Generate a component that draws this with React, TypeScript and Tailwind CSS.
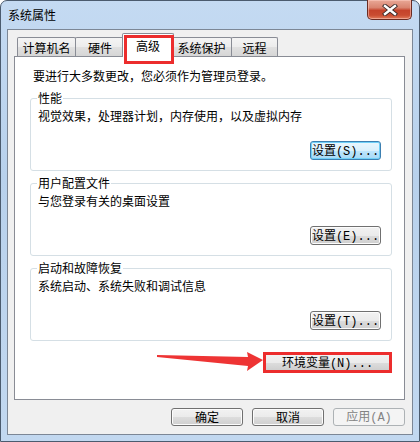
const btnGray =
  "flex items-center justify-center rounded-[3px] border border-[#707070] bg-[linear-gradient(to_bottom,#f2f2f2_0%,#ebebeb_50%,#dddddd_51%,#cfcfcf_100%)] shadow-[inset_0_0_0_1px_#fcfcfc] text-black";
const btnDefault =
  "flex items-center justify-center rounded-[3px] border border-[#3c7fb1] bg-[linear-gradient(to_bottom,#eaf6fd_0%,#d9f0fc_50%,#bee6fd_51%,#a7d9f5_100%)] shadow-[inset_0_0_0_1px_#6fd0f8] text-black";
const btnDisabled =
  "flex items-center justify-center rounded-[3px] border border-[#adb2b5] bg-[#f4f4f4] text-[#838383]";

const tabOff =
  "h-[19px] flex justify-center pt-[2px] border-t border-l border-r border-[#898c95] rounded-t-[2px] bg-[linear-gradient(to_bottom,#f4f4f4_0%,#ececec_50%,#e0e0e0_51%,#d6d6d6_100%)]";

// the ascii part of the button labels is set monospaced, like the old bitmap font
function Label({ cn, key_ }: { cn: string; key_: string }) {
  return (
    <span className="whitespace-nowrap">
      {cn}
      <span className="font-['Liberation_Mono',monospace] text-[12px]">{key_}</span>
    </span>
  );
}

function CloseButton() {
  return (
    <div className="-mt-px mr-[7px] w-[45px] h-[20px] flex items-center justify-center rounded-b-[5px] border border-t-0 border-[#6a2b22] bg-[linear-gradient(to_bottom,#e9a897_0%,#d98470_40%,#c5432b_55%,#c94c31_80%,#e17c5c_100%)] shadow-[inset_0_0_0_1px_rgba(255,210,200,0.5)]">
      <svg width="16" height="12" viewBox="0 0 16 12">
        <path d="M3 2 L13 10 M13 2 L3 10" stroke="#3b2a28" strokeWidth="4.2" strokeLinecap="square" />
        <path d="M3 2 L13 10 M13 2 L3 10" stroke="#ffffff" strokeWidth="2.4" strokeLinecap="square" />
      </svg>
    </div>
  );
}

function Group({ title, desc, hotkey, primary }: { title: string; desc: string; hotkey: string; primary?: boolean }) {
  return (
    <fieldset className="ml-[15px] mr-[12px] h-[81px] border border-[#d5dfe5] rounded-[3px] flex flex-col">
      <legend className="ml-[6px] px-[1px] leading-[16px]">{title}</legend>
      <div className="pl-[7px] mt-[2px]">{desc}</div>
      <div className="mt-[17px] pr-[10px] flex justify-end">
        <div className={`${primary ? btnDefault : btnGray} w-[71px] h-[19px]`}>
          <Label cn="设置" key_={hotkey} />
        </div>
      </div>
    </fieldset>
  );
}

export default function App() {
  return (
    <div className="relative w-[420px] h-[442px] flex flex-col rounded-t-[7px] border border-[#4b5b6e] bg-[linear-gradient(to_bottom,#c4daf2_0%,#b8d1ec_40%,#c2d8f0_100%)] font-['Noto_Sans_CJK_SC',sans-serif] text-[12px] leading-[16px] text-black">
      <div className="h-[28px] flex items-start justify-between">
        <span className="ml-[7px] mt-[6px]">系统属性</span>
        <CloseButton />
      </div>

      <div className="flex-1 mx-[6px] mb-[6px] flex flex-col border border-[#7c8796] bg-[#f0f0f0]">
        <div className="h-[26px] flex items-end pl-[9px]">
          <div className={`${tabOff} w-[59px]`}>计算机名</div>
          <div className={`${tabOff} -ml-px w-[50px]`}>硬件</div>
          <div className="relative z-10 -ml-[3px] -mb-px w-[52px] h-[24px] flex justify-center pt-[4px] border-t border-l border-r border-[#898c95] rounded-t-[2px] bg-white">
            高级
            <div className="absolute left-[1px] top-[1px] w-[50px] h-[29px] border-[3px] border-[#ec2d2d]" />
          </div>
          <div className={`${tabOff} -ml-[3px] w-[61px]`}>系统保护</div>
          <div className={`${tabOff} -ml-px w-[47px]`}>远程</div>
        </div>

        <div className="ml-[6px] mr-[7px] h-[344px] border border-[#898c95] bg-white flex flex-col">
          <div className="pl-[18px] pt-[11px]">要进行大多数更改，您必须作为管理员登录。</div>
          <div className="mt-[6px]">
            <Group title="性能" desc="视觉效果，处理器计划，内存使用，以及虚拟内存" hotkey="(S)..." primary />
          </div>
          <div className="mt-[4px]">
            <Group title="用户配置文件" desc="与您登录有关的桌面设置" hotkey="(E)..." />
          </div>
          <div className="mt-[4px]">
            <Group title="启动和故障恢复" desc="系统启动、系统失败和调试信息" hotkey="(T)..." />
          </div>
          <div className="mt-[11px] pr-[12px] flex justify-end">
            <div className="w-[129px] h-[21px] border-[3px] border-[#ec2d2d] flex">
              <div className="flex-1 flex items-center justify-center leading-[15px] bg-[linear-gradient(to_bottom,#f2f2f2_0%,#ebebeb_50%,#dddddd_51%,#cfcfcf_100%)]">
                <Label cn="环境变量" key_="(N)..." />
              </div>
            </div>
          </div>
        </div>

        <div className="mt-[8px] pr-[7px] flex justify-end gap-[9px]">
          <div className={`${btnGray} w-[72px] h-[18px]`}>确定</div>
          <div className={`${btnGray} w-[72px] h-[18px]`}>取消</div>
          <div className={`${btnDisabled} w-[72px] h-[18px]`}>
            <Label cn="应用" key_="(A)" />
          </div>
        </div>
      </div>

      <svg className="absolute left-[149px] top-[344px]" width="120" height="35" viewBox="0 0 120 35">
        <polygon points="7,10 98,12 97,7 113,15 97,26 98,21 7,12" fill="#ee3434" />
      </svg>
    </div>
  );
}
